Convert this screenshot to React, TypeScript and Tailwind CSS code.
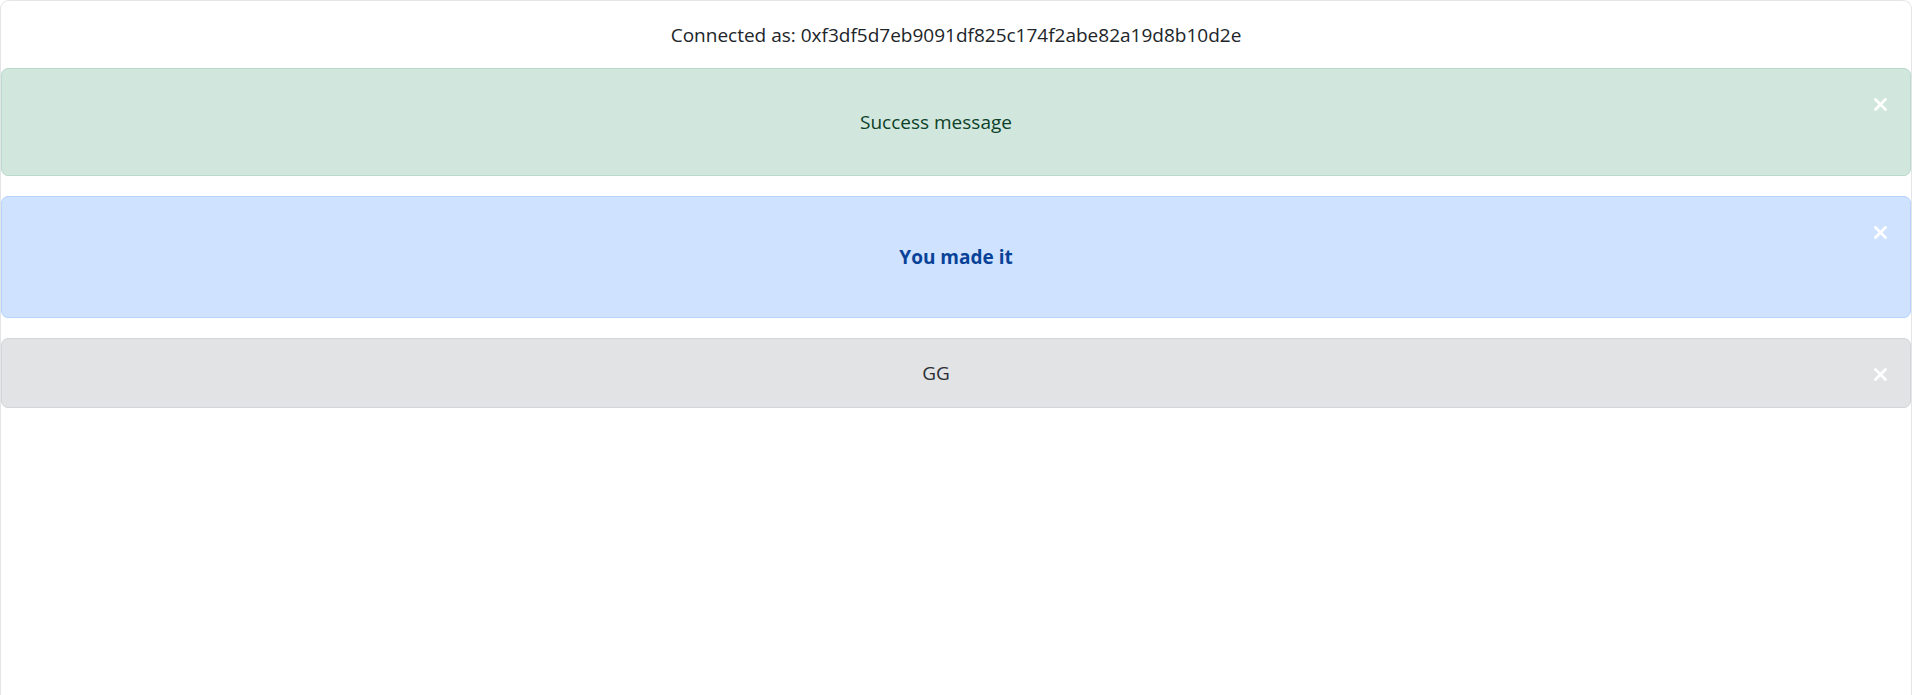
import React from "react";

function CloseX() {
  return (
    <button
      type="button"
      aria-label="Close"
      className="justify-self-end mt-[29px] mr-[23px] w-[13px] h-[13px] flex items-center justify-center"
    >
      <svg viewBox="0 0 12 12" width="13" height="13">
        <path d="M1.5 1.5 L10.5 10.5 M10.5 1.5 L1.5 10.5" stroke="#ffffff" strokeWidth="2.6" strokeLinecap="square" />
      </svg>
    </button>
  );
}

function Alert({
  box,
  text,
  cols,
  children,
}: {
  box: string;
  text: string;
  cols: string;
  children: React.ReactNode;
}) {
  return (
    <div className={"grid items-start rounded-[7px] border " + cols + " " + box}>
      <div />
      <div className={"text-center " + text}>{children}</div>
      <CloseX />
    </div>
  );
}

export default function App() {
  return (
    <div className="w-[1916px] h-[695px] bg-white font-['Open_Sans','Noto_Sans',sans-serif] text-[19px] leading-[30px] text-[#212529]">
      <div className="w-[1912px] h-[695px] flex flex-col gap-[20px] border-x border-t border-[#e3e5e8] rounded-t-[9px]">
        <p className="text-center pt-[19px] -mb-[2px]">
          Connected as: 0xf3df5d7eb9091df825c174f2abe82a19d8b10d2e
        </p>

        <Alert
          cols="grid-cols-[20px_1fr_60px]"
          box="border-[#badbcc] bg-[#d1e7dd]"
          text="py-[38px] text-[#0c4128]"
        >
          Success message
        </Alert>

        <Alert
          cols="grid-cols-[1fr_auto_1fr]"
          box="border-[#b6d4fe] bg-[#cfe2ff]"
          text="py-[45px] font-bold text-[#084298]"
        >
          You made it
        </Alert>

        <Alert
          cols="grid-cols-[20px_1fr_60px]"
          box="border-[#d3d6d8] bg-[#e2e3e5]"
          text="py-[19px] text-[#2b2f33]"
        >
          GG
        </Alert>
      </div>
    </div>
  );
}
